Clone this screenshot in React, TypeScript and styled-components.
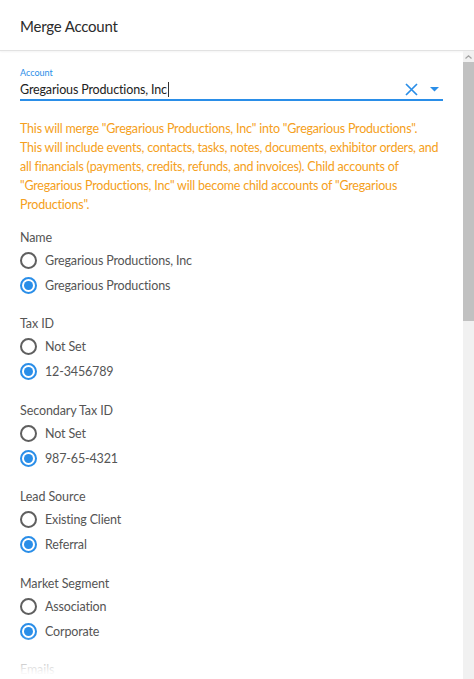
import React, { useState } from "react";
import styled, { createGlobalStyle } from "styled-components";

const FONT = `Lato, "Open Sans", "Liberation Sans", sans-serif`;
const BLUE = "#2a8ee8";

const GlobalStyle = createGlobalStyle`
  html, body {
    margin: 0;
    padding: 0;
    height: 100%;
    background: #fff;
    font-family: ${FONT};
  }
  #root {
    height: 100%;
  }
`;

type Group = { title: string; options: string[]; selected: number };

const groups: Group[] = [
  { title: "Name", options: ["Gregarious Productions, Inc", "Gregarious Productions"], selected: 1 },
  { title: "Tax ID", options: ["Not Set", "12-3456789"], selected: 1 },
  { title: "Secondary Tax ID", options: ["Not Set", "987-65-4321"], selected: 1 },
  { title: "Lead Source", options: ["Existing Client", "Referral"], selected: 1 },
  { title: "Market Segment", options: ["Association", "Corporate"], selected: 1 },
  { title: "Emails", options: ["info@gregariousinc.com", "info@gregarious.com"], selected: 1 },
  { title: "Phone Numbers", options: ["(555) 201-4410", "(555) 201-4400"], selected: 1 },
  { title: "Addresses", options: ["Not Set", "100 Main Street"], selected: 1 },
  { title: "Website", options: ["Not Set", "gregarious.com"], selected: 1 },
];

const warningLines = [
  `This will merge "Gregarious Productions, Inc" into "Gregarious Productions".`,
  `This will include events, contacts, tasks, notes, documents, exhibitor orders, and`,
  `all financials (payments, credits, refunds, and invoices). Child accounts of`,
  `"Gregarious Productions, Inc" will become child accounts of "Gregarious`,
  `Productions".`,
];

const App: React.FC = () => {
  const [picked, setPicked] = useState<number[]>(groups.map(g => g.selected));

  return (
    <>
      <GlobalStyle />
      <Dialog>
        <Header>
          <Title>Merge Account</Title>
        </Header>
        <Body>
          <Content>
            <Field>
              <FieldLabel>Account</FieldLabel>
              <FieldRow>
                <FieldValue>
                  Gregarious Productions, Inc<Caret />
                </FieldValue>
                <IconButton aria-label="Clear">
                  <svg width="13" height="13" viewBox="0 0 13 13">
                    <path d="M1 1 L12 12 M12 1 L1 12" stroke={BLUE} strokeWidth="1.7" fill="none" />
                  </svg>
                </IconButton>
                <IconButton aria-label="Open">
                  <svg width="9" height="5" viewBox="0 0 9 5">
                    <path d="M0 0 L9 0 L4.5 4.5 Z" fill={BLUE} />
                  </svg>
                </IconButton>
              </FieldRow>
            </Field>

            <Warning>
              {warningLines.map(line => (
                <WarningLine key={line}>{line}</WarningLine>
              ))}
            </Warning>

            {groups.map((g, gi) => (
              <GroupBlock key={g.title}>
                <GroupTitle>{g.title}</GroupTitle>
                {g.options.map((label, oi) => (
                  <RadioRow key={label} onClick={() => setPicked(p => p.map((v, i) => (i === gi ? oi : v)))}>
                    <RadioCircle $checked={picked[gi] === oi} />
                    <RadioText>{label}</RadioText>
                  </RadioRow>
                ))}
              </GroupBlock>
            ))}
          </Content>
        </Body>
        <Fade />
        <ScrollTrack>
          <ScrollArrow>
            <svg width="7" height="4" viewBox="0 0 7 4">
              <path d="M0.5 3.5 L3.5 0.8 L6.5 3.5" stroke="#a3a3a3" strokeWidth="1.2" fill="none" />
            </svg>
          </ScrollArrow>
          <ScrollThumb />
        </ScrollTrack>
      </Dialog>
    </>
  );
};

const Dialog = styled.div`
  position: relative;
  height: 100vh;
  display: flex;
  flex-direction: column;
  overflow: hidden;
`;

const Header = styled.div`
  height: 50px;
  flex-shrink: 0;
  display: flex;
  align-items: center;
  padding: 0 20px;
  border-bottom: 1px solid #e2e2e2;
  box-shadow: 0 1px 2px rgba(0, 0, 0, 0.05);
`;

const Title = styled.h2`
  margin: 0;
  font-size: 15px;
  letter-spacing: -0.2px;
  font-weight: 400;
  color: #2b2b2b;
  line-height: 20px;
  transform: translateY(1px);
`;

const Body = styled.div`
  flex: 1;
  overflow-y: auto;
  scrollbar-width: none;
  &::-webkit-scrollbar {
    display: none;
  }
`;

const Content = styled.div`
  padding: 16px 31px 300px 20px;
`;

const Field = styled.div`
  display: flex;
  flex-direction: column;
  border-bottom: 2px solid ${BLUE};
`;

const FieldLabel = styled.label`
  font-size: 9px;
  color: ${BLUE};
  line-height: 12px;
`;

const FieldRow = styled.div`
  display: flex;
  align-items: center;
  gap: 7px;
  height: 20px;
  padding-right: 1px;
`;

const FieldValue = styled.div`
  flex: 1;
  font-size: 12.5px;
  letter-spacing: -0.15px;
  color: #222;
  display: flex;
  align-items: center;
`;

const Caret = styled.span`
  display: inline-block;
  width: 1px;
  height: 15px;
  margin-left: 1px;
  background: #333;
`;

const IconButton = styled.button`
  border: none;
  background: none;
  padding: 0;
  width: 16px;
  height: 16px;
  display: flex;
  align-items: center;
  justify-content: center;
  cursor: pointer;
`;

const Warning = styled.div`
  margin-top: 17.5px;
  font-size: 12.5px;
  letter-spacing: -0.2px;
  line-height: 19px;
  color: #f5a020;
`;

const WarningLine = styled.div`
  white-space: nowrap;
`;

const GroupBlock = styled.div`
  margin-top: 14px;
  display: flex;
  flex-direction: column;
  & + & {
    margin-top: 16.5px;
  }
`;

const GroupTitle = styled.div`
  font-size: 12.5px;
  letter-spacing: -0.1px;
  line-height: 20px;
  color: #555;
`;

const RadioRow = styled.div`
  display: flex;
  align-items: center;
  height: 25px;
  cursor: pointer;
`;

const RadioCircle = styled.span<{ $checked: boolean }>`
  box-sizing: border-box;
  width: 17px;
  height: 17px;
  border-radius: 50%;
  border: 2px solid ${p => (p.$checked ? BLUE : "#5f5f5f")};
  margin-right: 8px;
  display: flex;
  align-items: center;
  justify-content: center;

  &::after {
    content: "";
    width: 9px;
    height: 9px;
    border-radius: 50%;
    background: ${BLUE};
    display: ${p => (p.$checked ? "block" : "none")};
  }
`;

const RadioText = styled.span`
  font-size: 12.5px;
  letter-spacing: -0.15px;
  color: #555;
`;

const Fade = styled.div`
  position: absolute;
  left: 0;
  right: 11px;
  bottom: 0;
  height: 44px;
  background: linear-gradient(
    to bottom,
    rgba(255, 255, 255, 0) 0%,
    rgba(255, 255, 255, 0.7) 65%,
    rgba(255, 255, 255, 0.95) 85%,
    #fff 100%
  );
  pointer-events: none;
`;

const ScrollTrack = styled.div`
  position: absolute;
  top: 51px;
  right: 0;
  bottom: 0;
  width: 11px;
  background: #f1f1f1;
  display: flex;
  flex-direction: column;
`;

const ScrollArrow = styled.div`
  height: 11px;
  display: flex;
  align-items: center;
  justify-content: center;
`;

const ScrollThumb = styled.div`
  height: 259px;
  background: #c1c1c1;
`;

export default App;
